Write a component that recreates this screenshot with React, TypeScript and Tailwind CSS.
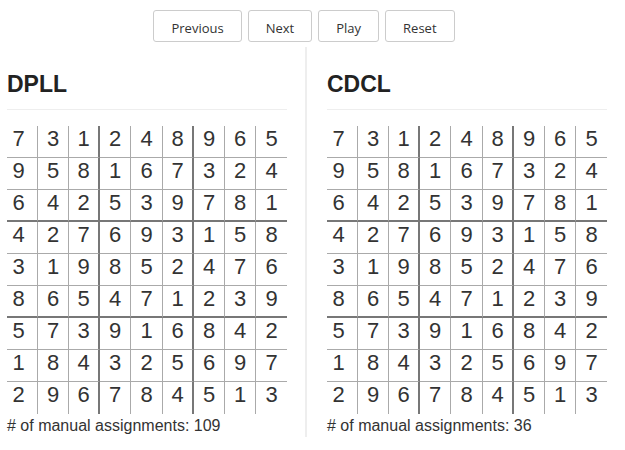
const dpll = [
  [7, 3, 1, 2, 4, 8, 9, 6, 5],
  [9, 5, 8, 1, 6, 7, 3, 2, 4],
  [6, 4, 2, 5, 3, 9, 7, 8, 1],
  [4, 2, 7, 6, 9, 3, 1, 5, 8],
  [3, 1, 9, 8, 5, 2, 4, 7, 6],
  [8, 6, 5, 4, 7, 1, 2, 3, 9],
  [5, 7, 3, 9, 1, 6, 8, 4, 2],
  [1, 8, 4, 3, 2, 5, 6, 9, 7],
  [2, 9, 6, 7, 8, 4, 5, 1, 3],
];

// both solvers end up on the same board
const cdcl = dpll.map((r) => [...r]);

function cellClass(r: number, c: number) {
  const parts = ['h-[32px] text-center text-[22px] leading-[26px] text-[#333]'];
  parts.push(c === 0 ? 'w-[31px] pr-[7px]' : c === 4 ? 'w-[32px]' : 'w-[31px]');
  if (c === 2 || c === 5) parts.push('border-r-2 border-r-[#777]');
  else if (c < 8) parts.push('border-r border-r-[#aaa]');
  if (r === 2 || r === 5) parts.push('border-b-2 border-b-[#777]');
  else if (r < 8) parts.push('border-b border-b-[#aaa]');
  return parts.join(' ');
}

function Board({ grid }: { grid: number[][] }) {
  return (
    <div className="flex flex-col">
      {grid.map((row, r) => (
        <div key={r} className="flex">
          {row.map((v, c) => (
            <div key={c} className={cellClass(r, c)}>
              {v}
            </div>
          ))}
        </div>
      ))}
    </div>
  );
}

function Solver({ name, grid, count }: { name: string; grid: number[][]; count: number }) {
  return (
    <div className="w-[280px] pt-[23px]">
      <h3 className="text-[23px] font-bold leading-[28px] text-[#222]">{name}</h3>
      <hr className="mt-[11px] border-0 border-t border-t-[#eee]" />
      <div className="mt-[16px]">
        <Board grid={grid} />
      </div>
      <p className="pt-[2px] text-[16px] leading-[20px] text-[#333]">
        # of manual assignments: {count}
      </p>
    </div>
  );
}

export default function App() {
  const buttons = ['Previous', 'Next', 'Play', 'Reset'];

  return (
    <div className="min-h-screen w-[625px] bg-white" style={{ fontFamily: '"Liberation Sans", Arial, sans-serif' }}>
      <div className="flex w-[608px] justify-center gap-[6px] pt-[10px]">
        {buttons.map((b) => (
          <button
            key={b}
            className="h-[32px] rounded-[3px] border border-[#ccc] bg-white px-[17px] pt-[3px] text-[13px] leading-[18px] text-[#333]"
            style={{ fontFamily: '"Open Sans", sans-serif' }}
          >
            {b}
          </button>
        ))}
      </div>

      <div className="mt-[5px] flex pl-[7px]">
        <Solver name="DPLL" grid={dpll} count={109} />
        <div className="ml-[18px] h-[390px] w-[2px] bg-[#eee]" />
        <div className="ml-[20px]">
          <Solver name="CDCL" grid={cdcl} count={36} />
        </div>
      </div>
    </div>
  );
}
